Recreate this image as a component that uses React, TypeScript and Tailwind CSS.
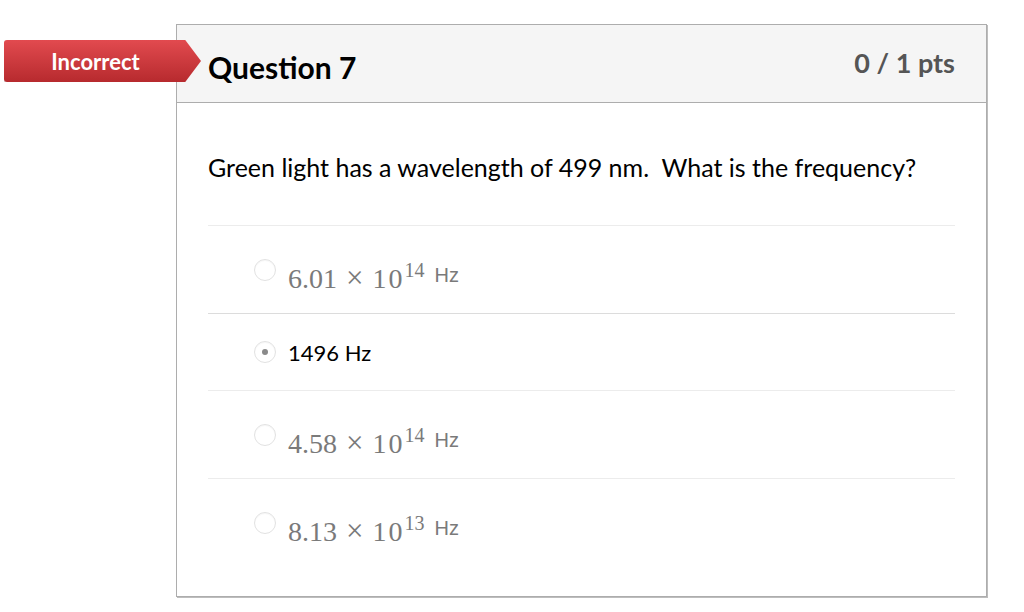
import type { ReactNode } from 'react'

type Answer = {
  selected?: boolean
  math?: { base: string; exp: string }
  text?: string
}

const answers: Answer[] = [
  { math: { base: '6.01', exp: '14' } },
  { text: '1496 Hz', selected: true },
  { math: { base: '4.58', exp: '14' } },
  { math: { base: '8.13', exp: '13' } },
]

function Radio({ checked }: { checked?: boolean }) {
  return (
    <span className="w-[22px] h-[22px] rounded-full border border-[#e2e2e2] bg-white flex items-center justify-center flex-shrink-0 shadow-[inset_0_1px_1px_rgba(0,0,0,0.04)]">
      {checked && <span className="w-[6px] h-[6px] rounded-full bg-[#8a8a8a]" />}
    </span>
  )
}

function MathAnswer({ base, exp }: { base: string; exp: string }) {
  return (
    <span className="flex items-end mt-[16px] text-[#7a7a7a]">
      <span className="font-['Liberation_Serif',serif] text-[28px] leading-none">
        {base}
        <span className="mx-[9px] text-[31px]">×</span>
        <span className="tracking-[2px]">10</span>
        <sup className="text-[20px] relative -top-[11px]">{exp}</sup>
      </span>
      <span className="ml-[10px] mb-[8px] font-['Liberation_Sans',sans-serif] text-[20px] leading-none">Hz</span>
    </span>
  )
}

function Row({ answer, dark }: { answer: Answer; dark?: boolean }) {
  let content: ReactNode
  if (answer.math) content = <MathAnswer base={answer.math.base} exp={answer.math.exp} />
  else content = <span className="text-[22px] text-black">{answer.text}</span>

  return (
    <div
      className={
        'flex items-center gap-[12px] pl-[46px] border-t ' +
        (dark ? 'border-[#dcdcdc]' : 'border-[#ececec]') +
        (answer.math ? ' h-[88px]' : ' h-[77px]')
      }
    >
      <Radio checked={answer.selected} />
      {content}
    </div>
  )
}

export default function App() {
  return (
    <div className="min-h-screen bg-white font-['Lato',sans-serif] pt-[24px] pl-[176px]">
      <div className="relative w-[811px] border border-[#adadad] shadow-[1px_1px_0_#bdbdbd]">
        <div className="absolute -left-[173px] top-[15px] h-[42px] w-[197px] flex">
          <div className="h-full flex-1 flex items-center justify-center pr-[14px] text-white font-bold text-[22px] rounded-l-[3px] bg-gradient-to-b from-[#e24a4f] to-[#b72a2e] shadow-[0_1px_2px_rgba(0,0,0,0.35)] [clip-path:polygon(0_0,92%_0,100%_50%,92%_100%,0_100%)]">
            Incorrect
          </div>
        </div>

        <div className="h-[78px] bg-[#f5f5f5] border-b border-[#adadad] flex items-start justify-between px-[31px]">
          <h2 className="mt-[27px] text-[30px] font-bold text-black leading-none">Question 7</h2>
          <div className="mt-[24px] text-[27px] font-bold text-[#555] leading-none">0 / 1 pts</div>
        </div>

        <div className="px-[31px] pb-[30px]">
          <p className="pt-[48px] pb-[41px] text-[25px] leading-[33px] text-black whitespace-pre">
            {'Green light has a wavelength of 499 nm.  What is the frequency?'}
          </p>
          {answers.map((a, i) => (
            <Row key={i} answer={a} dark={i === 1} />
          ))}
        </div>
      </div>
    </div>
  )
}
